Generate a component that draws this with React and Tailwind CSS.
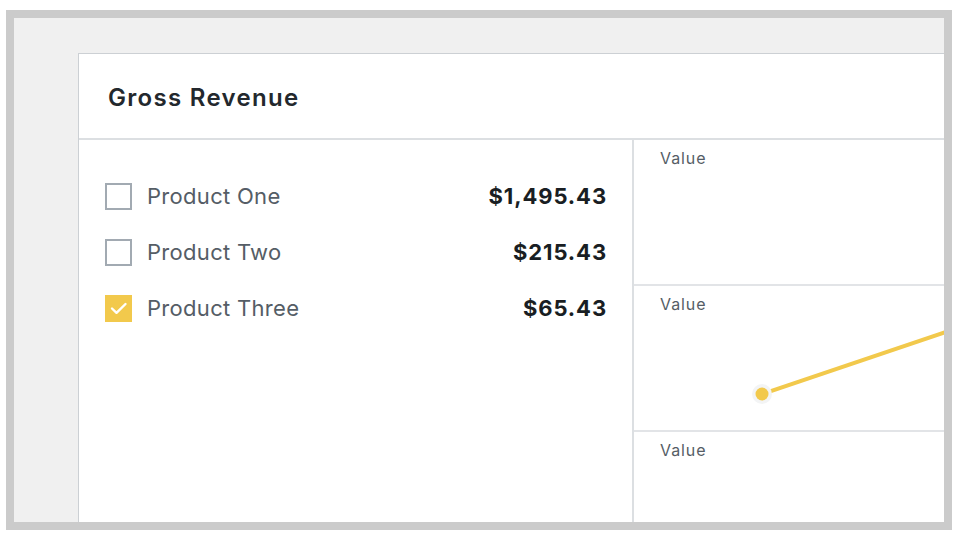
import React from "react";

const products = [
  { name: "Product One", amount: "$1,495.43", checked: false },
  { name: "Product Two", amount: "$215.43", checked: false },
  { name: "Product Three", amount: "$65.43", checked: true },
];

const Checkbox = ({ checked }) =>
  checked ? (
    <span className="block h-[27px] w-[27px] shrink-0 bg-[#f2c94c]">
      <svg width="27" height="27" viewBox="0 0 27 27" fill="none">
        <path d="M7 13.5l4.5 4.3 9-8.8" stroke="#fff" strokeWidth="2.4" strokeLinecap="round" strokeLinejoin="round" />
      </svg>
    </span>
  ) : (
    <span className="h-[27px] w-[27px] shrink-0 border-2 border-[#a2aab2] bg-white" />
  );

export default function App() {
  return (
    <div className="h-[538px] w-[966px] bg-white pl-[6px] pt-[10px] font-['Inter','Noto_Sans',sans-serif]">
      <div className="h-[520px] w-[946px] overflow-hidden border-8 border-[#cbcbcb] bg-[#f0f0f0] pl-[64px] pt-[35px]">
        <div className="w-[1000px] border border-[#ccd0d4] bg-white">
          {/* Header */}
          <div className="flex h-[86px] items-center border-b-2 border-[#dcdfe2] pl-[29px] pt-[4px]">
            <h2 className="text-[24px] font-semibold tracking-[1.3px] text-[#23282d]">Gross Revenue</h2>
          </div>

          <div className="flex">
            {/* Product list */}
            <div className="h-[420px] w-[555px] shrink-0 border-r-2 border-[#dcdfe2] pl-[26px] pr-[25px] pt-[28px]">
              {products.map((p) => (
                <div key={p.name} className="flex h-[56px] items-center">
                  <Checkbox checked={p.checked} />
                  <span className="ml-[15px] flex-1 text-[22px] tracking-[0.3px] text-[#555d66]">{p.name}</span>
                  <span className="text-[22px] font-bold tracking-[0.9px] text-[#191e23]">{p.amount}</span>
                </div>
              ))}
            </div>

            {/* Chart rows */}
            <div className="flex-1">
              <div className="h-[146px] border-b-2 border-[#e2e4e7] pl-[26px] pt-[6px]">
                <span className="text-[16px] tracking-[0.9px] text-[#555d66]">Value</span>
              </div>
              <div className="relative h-[146px] border-b-2 border-[#e2e4e7] pl-[26px] pt-[6px]">
                <span className="text-[16px] tracking-[0.9px] text-[#555d66]">Value</span>
                <svg className="absolute left-0 top-0" width="366" height="146">
                  <line x1="128" y1="108" x2="330" y2="40" stroke="#f2c94c" strokeWidth="4" />
                  <circle cx="128" cy="108" r="10" fill="#f3f4f5" />
                  <circle cx="128" cy="108" r="6.5" fill="#f2c94c" />
                </svg>
              </div>
              <div className="h-[146px] pl-[26px] pt-[6px]">
                <span className="text-[16px] tracking-[0.9px] text-[#555d66]">Value</span>
              </div>
            </div>
          </div>
        </div>
      </div>
    </div>
  );
}
